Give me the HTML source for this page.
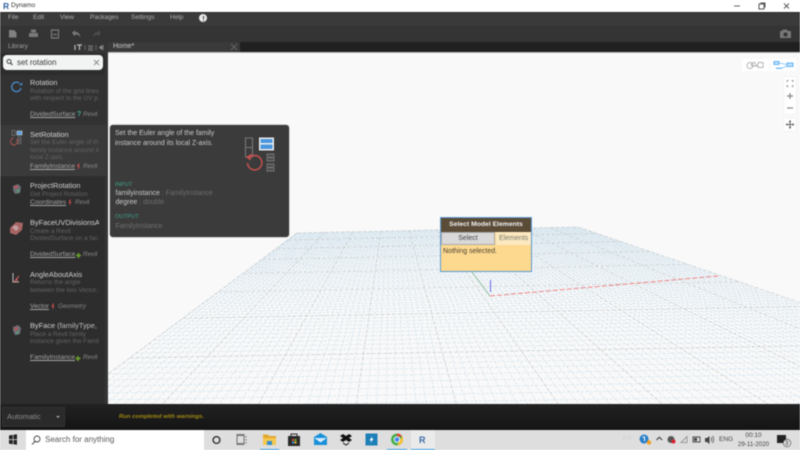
<!DOCTYPE html>
<html><head><meta charset="utf-8"><style>
html,body{margin:0;padding:0;width:800px;height:450px;overflow:hidden;background:#fff}
body{font-family:"Liberation Sans",sans-serif;position:relative}
.r{position:absolute}
.t{position:absolute;white-space:nowrap;line-height:10px;height:10px;font-size:7px}
.h{color:#d0d0d0;font-size:7.4px}
.d{color:#636363;font-size:6.4px}
.c{color:#a4a4a4;font-size:6.7px;text-decoration:underline}
.i{color:#858585;font-size:6.4px;font-style:italic}
.m{color:#adadad;font-size:6.5px}
svg{position:absolute;overflow:hidden}
#clip{position:absolute;left:0;top:0;width:800px;height:450px;overflow:hidden}
#wrap{position:absolute;left:0;top:0;width:800px;height:450px;filter:blur(.4px)}
</style></head><body><div id="clip"><div id="wrap">

<div class="r" style="left:0;top:0;width:800px;height:12px;background:#fff"></div>
<div class="t" style="left:3px;top:1px;width:6px;font-weight:bold;color:#2f5f9f;font-size:8.500px">R</div>
<div class="t" style="left:11px;top:1px;color:#333;font-size:6.500px">Dynamo</div>
<svg style="left:0;top:0" width="800" height="12"><path d="M734 6h6" stroke="#666" stroke-width="1"/><path d="M759 4h5v5h-5zM761 4V3h4v4h-1" fill="none" stroke="#555" stroke-width="1"/><path d="M784 3.500l5 5m0-5l-5 5" stroke="#555" stroke-width=".9"/></svg>

<div class="r" style="left:0;top:12px;width:800px;height:14px;background:#3a3a3a;border-top:1px solid #2a2a2a;box-sizing:border-box"></div>
<div class="t m" style="left:8px;top:13px">File</div>
<div class="t m" style="left:33px;top:13px">Edit</div>
<div class="t m" style="left:60px;top:13px">View</div>
<div class="t m" style="left:90px;top:13px">Packages</div>
<div class="t m" style="left:131px;top:13px">Settings</div>
<div class="t m" style="left:170px;top:13px">Help</div>
<div class="r" style="left:199px;top:14px;width:8px;height:8px;border-radius:50%;background:#e8e8e8"></div>
<div class="r" style="left:202.500px;top:15.500px;width:1.500px;height:3.500px;background:#333"></div>
<div class="r" style="left:202.500px;top:20px;width:1.500px;height:1.200px;background:#333"></div>

<div class="r" style="left:0;top:26px;width:800px;height:16px;background:#343434"></div>
<svg style="left:0;top:26px" width="800" height="16">
<path d="M9 4h5l2.500 2.500V11.500H9z" fill="#808080"/>
<path d="M31 3.500h5v3h-5zM29 7h9v4h-9z" fill="#7a7a7a"/>
<path d="M51.500 4h7v8h-7zM53 8.500h4" fill="none" stroke="#7a7a7a" stroke-width="1.200"/>
<path d="M72 7l3-3v2c3 0 5 1.500 5.500 5-1.500-2-3-2.500-5.500-2.500v2z" fill="#7a7a7a"/>
<path d="M101 7l-3-3v2c-3 0-4.500 1.500-5 5 1.500-2 3-2.500 5-2.500v2z" fill="#4c4c4c"/>
<path d="M780 5h2l1-1.500h4l1 1.500h3v7h-11z" fill="#777"/><circle cx="785.500" cy="8.500" r="2" fill="#343434"/>
</svg>

<div class="r" style="left:0;top:42px;width:108px;height:11px;background:#353535"></div>
<div class="r" style="left:108px;top:42px;width:692px;height:10px;background:#202020"></div>
<div class="r" style="left:108px;top:42px;width:132px;height:10px;background:#3a3a3a"></div>
<div class="r" style="left:108px;top:52px;width:692px;height:1px;background:#bdbdbd"></div>
<div class="t" style="left:8px;top:42px;color:#a0a0a0;font-size:6.500px">Library</div>
<svg style="left:70px;top:42px" width="36" height="10"><path d="M5 3v5M7 3h5M9.500 3v5" stroke="#bbb" stroke-width="1.200" fill="none"/><path d="M15 3v5" stroke="#666"/><path d="M18 4h5M18 6h5M18 8h5" stroke="#999" stroke-width=".8"/><path d="M26 3v5" stroke="#666"/><path d="M29 5.500l3-2.500v5z" fill="#999"/><path d="M33 3v5" stroke="#888"/></svg>
<div class="t" style="left:113px;top:42px;color:#ccc;font-size:7px">Home*</div>
<svg style="left:230px;top:43px" width="8" height="8"><path d="M1 1l6 6m0-6l-6 6" stroke="#666" stroke-width=".9"/></svg>

<!-- canvas -->
<div class="r" style="left:108px;top:53px;width:692px;height:351px;background:#f9f9f9"></div>
<svg id="grid" style="left:108px;top:53px" width="692" height="351" viewBox="108 53 692 351"></svg>
<svg style="left:0;top:0" width="800" height="450">
<path d="M490 296L472 272" stroke="#7fb58a" stroke-width=".7"/>
<path d="M490.500 280v12" stroke="#6a6ae8" stroke-width="1"/>
<path d="M490 296L718 276" stroke="#ee7b7b" stroke-width=".9" stroke-dasharray="5 2"/>
</svg>

<!-- view toggle -->
<div class="r" style="left:742px;top:59px;width:27px;height:12px;background:#fff"></div>
<div class="r" style="left:770px;top:59px;width:26px;height:12px;background:#fff"></div>
<svg style="left:0;top:0" width="800" height="450">
<circle cx="750" cy="65.500" r="3" fill="none" stroke="#999" stroke-width=".7"/><path d="M751 65l3-3 3 4h-5z" fill="none" stroke="#999" stroke-width=".7"/><path d="M758 62.500h5v5h-5z" fill="none" stroke="#999" stroke-width=".7"/>
<path d="M774 61.500h5v3h-5zM787 63h6v3.500h-6z" fill="#bfe0ff" stroke="#3fa2f2" stroke-width=".8"/><path d="M776 67.500h6v1.500h-6z" fill="#7cc0f5"/><path d="M779 63l8 1.500M782 68l5-2" stroke="#7cc0f5" stroke-width=".7"/>
</svg>
<div class="r" style="left:784px;top:77px;width:12px;height:37px;background:#fff;box-shadow:0 0 1px #ccc"></div>
<div class="r" style="left:784px;top:118px;width:12px;height:13px;background:#fff;box-shadow:0 0 1px #ccc"></div>
<svg style="left:0;top:0" width="800" height="450">
<path d="M787 82v-1.500h1.500M793 82v-1.500h-1.500M787 85v1.500h1.500M793 85v1.500h-1.500" fill="none" stroke="#777" stroke-width=".7"/>
<path d="M787 96h6M790 93v6" stroke="#888" stroke-width="1.200"/><path d="M787 108h6" stroke="#888" stroke-width="1.200"/>
<path d="M786.500 124.500h7M790 121v7" stroke="#666" stroke-width="1"/><path d="M785.500 124.500l2-1.500v3zM794.500 124.500l-2-1.500v3zM790 120l-1.500 2h3zM790 129l-1.500-2h3z" fill="#666"/>
</svg>

<!-- sidebar -->
<div class="r" style="left:0;top:53px;width:108px;height:351px;background:#2d2d2d"></div>
<div class="r" style="left:105px;top:53px;width:3px;height:351px;background:#353535"></div>
<div class="r" style="left:0;top:75px;width:106px;height:50px;background:#323232"></div>
<div class="r" style="left:0;top:125px;width:106px;height:51px;background:#3a3a3a"></div>
<div class="r" style="left:3px;top:55px;width:100px;height:15px;background:#f2f4f3;border-radius:4px"></div>
<svg style="left:5px;top:57px" width="10" height="10"><circle cx="4" cy="4.500" r="2" fill="none" stroke="#444" stroke-width="1"/><path d="M5.500 6l2 2" stroke="#444" stroke-width="1.200"/></svg>
<div class="t" style="left:17px;top:58px;color:#3a3a3a;font-size:8px">set rotation</div>
<svg style="left:93px;top:59px" width="7" height="7"><path d="M1 1l5 5m0-5l-5 5" stroke="#888" stroke-width=".9"/></svg>

<div style="position:absolute;left:30px;top:0;width:69px;height:404px;overflow:hidden">
<div class="t h" style="left:0;top:78px">Rotation</div>
<div class="t d" style="left:0;top:86.500px">Rotation of the grid lines</div>
<div class="t d" style="left:0;top:94px">with respect to the UV p...</div>
<div class="t c" style="left:0;top:110px">DividedSurface</div>
<div class="t h" style="left:0;top:129.500px">SetRotation</div>
<div class="t d" style="left:0;top:138px">Set the Euler angle of the</div>
<div class="t d" style="left:0;top:145.500px">family instance around its</div>
<div class="t d" style="left:0;top:153px">local Z-axis.</div>
<div class="t c" style="left:0;top:162px">FamilyInstance</div>
<div class="t h" style="left:0;top:181px">ProjectRotation</div>
<div class="t d" style="left:0;top:190px">Get Project Rotation</div>
<div class="t c" style="left:0;top:198px">Coordinates</div>
<div class="t h" style="left:0;top:218px">ByFaceUVDivisionsAndOffsets</div>
<div class="t d" style="left:0;top:227px">Create a Revit</div>
<div class="t d" style="left:0;top:234px">DividedSurface on a fac...</div>
<div class="t c" style="left:0;top:250px">DividedSurface</div>
<div class="t h" style="left:0;top:269.500px">AngleAboutAxis</div>
<div class="t d" style="left:0;top:278px">Returns the angle</div>
<div class="t d" style="left:0;top:286px">between the two Vector...</div>
<div class="t c" style="left:0;top:302px">Vector</div>
<div class="t h" style="left:0;top:321px">ByFace <span style="color:#bbb">(familyType, face)</span></div>
<div class="t d" style="left:0;top:330px">Place a Revit family</div>
<div class="t d" style="left:0;top:337px">instance given the Famil...</div>
<div class="t c" style="left:0;top:353px">FamilyInstance</div>
</div>
<div class="t" style="left:77px;top:110px;color:#3fb0a0;font-size:7px;font-weight:bold">?</div>
<div class="t i" style="left:83px;top:110px">Revit</div>
<div class="t i" style="left:83px;top:162px">Revit</div>
<div class="t i" style="left:75px;top:198px">Revit</div>
<div class="t i" style="left:83px;top:250px">Revit</div>
<div class="t i" style="left:58px;top:302px">Geometry</div>
<div class="t i" style="left:83px;top:353px">Revit</div>
<svg style="left:0;top:0" width="110" height="404">
<path d="M78.500 163.500l-1.500 3h1.300l-.5 3.500 2-4h-1.300l1-2.500z" fill="#e05555"/>
<path d="M70 199.500l-1.500 3h1.300l-.5 3.500 2-4h-1.300l1-2.500z" fill="#e05555"/>
<path d="M53 303.500l-1.500 3h1.300l-.5 3.500 2-4h-1.300l1-2.500z" fill="#e05555"/>
<path d="M76 255.500h5M78.500 253v5" stroke="#6aa52a" stroke-width="1.600"/>
<path d="M75.500 358.500h5M78 356v5" stroke="#6aa52a" stroke-width="1.600"/>
<path d="M19.500 83.300A4.700 4.700 0 1 0 21 88" fill="none" stroke="#4a8fd0" stroke-width="1.200"/><path d="M19 85l3 .5 .5-3z" fill="#4a8fd0"/>
<path d="M12 130.500h3v5h-3z" fill="none" stroke="#777" stroke-width=".7"/><path d="M17 131h5v4h-5z" fill="#5aa0e0" stroke="#ddd" stroke-width=".6"/><path d="M18 137h3v2.500h-3zM18 141h3v2.500h-3z" fill="none" stroke="#777" stroke-width=".7"/>
<path d="M13.500 138a3.500 3.500 0 1 0 3 1" fill="none" stroke="#b85550" stroke-width=".9"/>
<path d="M13 186l5-2 3 3-1 6-5 1-2-4z" fill="#6d6d78"/><path d="M14 186l3-1 1 3-3 1z" fill="#b05a5a"/><path d="M17 190l3-1-1 3-2 1z" fill="#5a9a7a"/>
<path d="M10 228l6-6 7 1-1 7-6 5-6-2z" fill="#a76464"/><path d="M12 227l4-2 3 3-3 3z" fill="#ddd" opacity=".5"/>
<path d="M13 273v9h6" fill="none" stroke="#bbb" stroke-width="1"/><path d="M14 282l5-6" stroke="#d06060" stroke-width="1"/><path d="M17 278v4" stroke="#d06060"/>
<path d="M13 327l5-2 3 3-1 6-5 1-2-4z" fill="#6d6d78"/><path d="M14 328l3-1 1 3-3 1z" fill="#b05a5a"/><path d="M16 332l3-1-1 3-2 1z" fill="#5a9a7a"/>
</svg>

<!-- tooltip -->
<div class="r" style="left:110px;top:125px;width:179px;height:112px;background:#3b3b3b;border-radius:3px;box-shadow:0 0 1px #222"></div>
<div class="t" style="left:115px;top:129px;color:#c8c8c8;font-size:7px">Set the Euler angle of the family</div>
<div class="t" style="left:115px;top:139px;color:#c8c8c8;font-size:7px">instance around its local Z-axis.</div>
<div class="t" style="left:115px;top:180px;color:#3fa08c;font-size:5.800px">INPUT</div>
<div class="t" style="left:115.500px;top:188.700px;color:#c8c8c8;font-size:7px">familyinstance <span style="color:#6f6f6f">: FamilyInstance</span></div>
<div class="t" style="left:115.500px;top:197.700px;color:#c8c8c8;font-size:7px">degree <span style="color:#6f6f6f">: double</span></div>
<div class="t" style="left:115px;top:212px;color:#3fa08c;font-size:5.800px">OUTPUT</div>
<div class="t" style="left:115.500px;top:221.700px;color:#6f6f6f;font-size:7px">FamilyInstance</div>
<svg style="left:0;top:0" width="300" height="240">
<path d="M245.500 138h7v19h-7zM245.500 147.500h7" fill="none" stroke="#777" stroke-width="1.100"/>
<path d="M259 137.500h15v13h-15z" fill="#eee"/><path d="M260.500 139h12v4h-12zM260.500 144.500h12v4.500h-12z" fill="#4a96de"/>
<path d="M267 154h7v7h-7zM267 164h7v7h-7z" fill="#4c4c4c" stroke="#777" stroke-width=".9"/><path d="M268 157.500h5M268 167.500h5" stroke="#888" stroke-width=".9"/>
<path d="M251 156.500A7.200 7.200 0 1 1 247.500 163" fill="none" stroke="#c0504d" stroke-width="1.600"/><path d="M251.500 153.500l-.8 7-5-3.200z" fill="#c0504d"/>
</svg>

<!-- node -->
<div class="r" style="left:440px;top:217px;width:92px;height:55px;background:#fdd98f;border:1px solid #5b9bd5;box-sizing:border-box"></div>
<div class="r" style="left:441px;top:218px;width:90px;height:14px;background:#5b4c38"></div>
<div class="t" style="left:441px;top:220px;width:90px;text-align:center;color:#f0f0f0;font-size:6.800px;font-weight:bold">Select Model Elements</div>
<div class="r" style="left:441px;top:232px;width:54px;height:13px;background:#d9d9d9;border:1px solid #aaa;box-sizing:border-box"></div>
<div class="t" style="left:441px;top:233.500px;width:54px;text-align:center;color:#444;font-size:7px">Select</div>
<div class="r" style="left:496px;top:232px;width:35px;height:13px;background:#fbe8bf"></div>
<div class="t" style="left:499px;top:233.500px;color:#7a7a70;font-size:7px">Elements</div>
<div class="t" style="left:443px;top:247px;color:#4a4030;font-size:7px">Nothing selected.</div>

<!-- status -->
<div class="r" style="left:0;top:404px;width:800px;height:26px;background:linear-gradient(#222,#141414)"></div>
<div class="r" style="left:2px;top:407px;width:63px;height:20px;background:#2a2a2a;border:1px solid #333;box-sizing:border-box"></div>
<div class="t" style="left:7px;top:412px;color:#8c8c8c;font-size:7.600px">Automatic</div>
<div class="r" style="left:56px;top:416px;border:2px solid transparent;border-top:2px solid #aaa"></div>
<div class="t" style="left:119px;top:412px;color:#a38a12;font-size:5.900px;font-style:italic;font-weight:bold">Run completed with warnings.</div>

<!-- taskbar -->
<div class="r" style="left:0;top:430px;width:800px;height:20px;background:#dedede"></div>
<div class="r" style="left:26px;top:430px;width:178px;height:20px;background:#fff"></div>
<svg style="left:0;top:430px" width="800" height="20">
<path d="M9 5.500l3.800-.6v4.300H9zM13.500 4.800l3.500-.5v4.900h-3.500zM9 10h3.800v4.200L9 13.600zM13.500 10H17v4.800l-3.500-.5z" fill="#222"/>
<circle cx="37" cy="9" r="3" fill="none" stroke="#444" stroke-width=".9"/><path d="M35 11.500l-3 3" stroke="#444" stroke-width=".9"/>
<circle cx="216.500" cy="10" r="3.400" fill="none" stroke="#222" stroke-width="1.300"/>
<path d="M237 5.500h7v8h-7zM236.500 4.500h8M236.500 14.500h8M246 6v1.500M246 9v1.500M246 12v1.500" fill="none" stroke="#555" stroke-width=".8"/>
<path d="M263 4.500h5l1 1.500h7v2h-13z" fill="#e0a92e"/><path d="M263 8h13v7h-13z" fill="#f5c74e"/><path d="M267 11h5v4h-5z" fill="#2f8fd0"/>
<path d="M260 19h19v1h-19z" fill="#3aa0e8"/>
<path d="M288 6h12v10h-12z" fill="#2a2a2a"/><path d="M291 6V4h6v2" fill="none" stroke="#2a2a2a"/><path d="M292 9h2v2h-2z" fill="#e05030"/><path d="M294.500 9h2v2h-2z" fill="#70b030"/><path d="M292 11.500h2v2h-2z" fill="#30a0e0"/><path d="M294.500 11.500h2v2h-2z" fill="#f0c030"/>
<path d="M314 7l6.500-4 6.500 4v8h-13z" fill="#1a90d8"/><path d="M315 8l5.500 4 5.500-4" fill="#cfeaff" stroke="#fff" stroke-width=".7"/>
<path d="M340 6l3-2 3 2 3-2 3 2-3 2 3 2-3 2-3-2-3 2-3-2 3-2z" fill="#111"/><path d="M343 13l3 2 3-2" fill="none" stroke="#111"/>
<path d="M365.500 3.500h12v12h-12z" fill="#1d7fb8"/><path d="M372.500 5.500l-3 5h2l-1 3 3-5h-2z" fill="#fff"/>
<circle cx="397" cy="9.500" r="6" fill="#4caf50"/><path d="M397 3.500a6 6 0 0 1 5.200 3H397z" fill="#e34234"/><path d="M402.200 6.500a6 6 0 0 1-5 9l2.500-5z" fill="#fbc02d"/><circle cx="397" cy="9.500" r="2.700" fill="#4285f4" stroke="#fff" stroke-width=".9"/>
<path d="M387 19h20v1h-20z" fill="#3aa0e8"/>
<path d="M411 0h24v20h-24z" fill="#eaeaea"/><path d="M411 19h24v1h-24z" fill="#3aa0e8"/>
<path d="M644 4.500a4.500 4.500 0 1 0 .1 9 4.500 4.500 0 0 0-.1-9z" fill="#2a80c8"/><path d="M642.500 7h2v4" fill="none" stroke="#fff" stroke-width="1"/>
<circle cx="649" cy="12.500" r="2.200" fill="#f0a020"/>
<path d="M656.500 10l2.800-2.800 2.800 2.800" fill="none" stroke="#333" stroke-width="1"/>
<circle cx="671" cy="9.500" r="3.500" fill="#555"/><circle cx="673.500" cy="11.500" r="2" fill="#d82030"/>
<path d="M681 12.500l6-6v6z" fill="none" stroke="#888" stroke-width=".8"/>
<path d="M693 7h7v5h-7z" fill="none" stroke="#444" stroke-width=".9"/><path d="M694 8h3v3h-3z" fill="#444"/>
<path d="M705 8h2l2.500-2v8L707 12h-2z" fill="#444"/><path d="M711 7.500q1.500 2 0 4M712.500 6q2.500 3.500 0 7" fill="none" stroke="#444" stroke-width=".7"/>
<path d="M777 5h9v8h-9z" fill="#222"/><circle cx="787" cy="13" r="3.800" fill="#e0e0e0" stroke="#444" stroke-width=".6"/>
</svg>
<div class="t" style="left:45px;top:435px;color:#5a5a5a;font-size:8px">Search for anything</div>
<div class="t" style="left:419px;top:435px;color:#3a6ba8;font-size:9px;font-weight:bold">R</div>
<div class="t" style="left:719px;top:435px;color:#444;font-size:6.500px">ENG</div>
<div class="t" style="left:731px;top:430.500px;width:45px;text-align:center;color:#444;font-size:6.500px">00:10</div>
<div class="t" style="left:731px;top:440px;width:45px;text-align:center;color:#444;font-size:6.200px">29-11-2020</div>
<div class="t" style="left:785px;top:438.500px;color:#333;font-size:6px">3</div>
<div class="t" style="left:623px;top:434px;color:#cfcfcf;font-size:6px">EN</div>
</div></div>
<script>
(function(){
var O=[297,233],A=[578,227],C=[-730,1000],R=[2852,1000];
var dx1=A[0]-R[0],dx2=C[0]-R[0],sx=O[0]-A[0]+R[0]-C[0];
var dy1=A[1]-R[1],dy2=C[1]-R[1],sy=O[1]-A[1]+R[1]-C[1];
var den=dx1*dy2-dx2*dy1;
var g=(sx*dy2-dx2*sy)/den,h=(dx1*sy-sx*dy1)/den;
var a=A[0]-O[0]+g*A[0],b=C[0]-O[0]+h*C[0],d=A[1]-O[1]+g*A[1],e=C[1]-O[1]+h*C[1];
function P(u,v){var w=g*u+h*v+1;return [(a*u+b*v+O[0])/w,(d*u+e*v+O[1])/w];}
var N=100,s='';
var X0=108,X1=800,Y0=53,Y1=404;
function line(p,q,c,wd,da){
  var dx=q[0]-p[0],dy=q[1]-p[1],t0=0,t1=1;
  var ps=[-dx,dx,-dy,dy],qs=[p[0]-X0,X1-p[0],p[1]-Y0,Y1-p[1]];
  for(var k=0;k<4;k++){
    if(ps[k]===0){if(qs[k]<0)return;continue;}
    var r=qs[k]/ps[k];
    if(ps[k]<0){if(r>t0)t0=r;}else{if(r<t1)t1=r;}
  }
  if(t0>=t1)return;
  s+='<line x1="'+(p[0]+dx*t0).toFixed(1)+'" y1="'+(p[1]+dy*t0).toFixed(1)+'" x2="'+(p[0]+dx*t1).toFixed(1)+'" y2="'+(p[1]+dy*t1).toFixed(1)+'" stroke="'+c+'" stroke-width="'+wd+'" stroke-dasharray="'+da+'"/>';
}
for(var pass=0;pass<2;pass++){
 for(var i=0;i<=N;i++){
  var major=(i%10===0);
  if((pass===1)!==major)continue;
  var t=i/N;
  var col=major?'#bcc5ca':'#d3e3ed',wd=major?0.6:0.7,da=major?'4 1.5':'3 1.5';
  line(P(t,0),P(t,1),col,wd,da);
  line(P(0,t),P(1,t),col,wd,da);
 }
}
document.getElementById('grid').innerHTML=s;
})();
</script>
</body></html>
